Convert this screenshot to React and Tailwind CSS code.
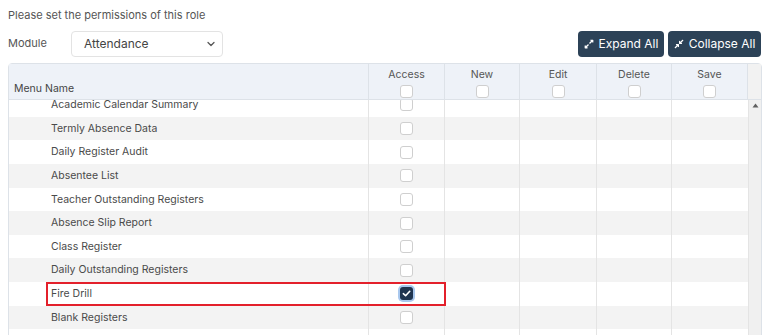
import { ChevronDown } from "lucide-react";
import { FaExpandAlt, FaCompressAlt } from "react-icons/fa";

const rows = [
  "Academic Calendar Summary",
  "Termly Absence Data",
  "Daily Register Audit",
  "Absentee List",
  "Teacher Outstanding Registers",
  "Absence Slip Report",
  "Class Register",
  "Daily Outstanding Registers",
  "Fire Drill",
  "Blank Registers",
];

const cols = ["Access", "New", "Edit", "Delete", "Save"];

const Box = ({ checked }) =>
  checked ? (
    <span className="w-[13px] h-[13px] rounded-[3px] bg-[#1f3550] ring-2 ring-[#a9c8ee] flex items-center justify-center">
      <svg width="9" height="9" viewBox="0 0 10 10" fill="none">
        <path d="M1.5 5.2 L4 7.5 L8.6 2.5" stroke="white" strokeWidth="1.8" strokeLinecap="round" strokeLinejoin="round" />
      </svg>
    </span>
  ) : (
    <span className="w-[13px] h-[13px] rounded-[3px] bg-white border border-[#cfcfcf]" />
  );

const App = () => {
  return (
    <div className="w-[768px] h-[335px] overflow-hidden bg-white font-['Inter',sans-serif] text-[#4a4a4a]">

      <p className="pl-2 pt-[8px] text-[11px] leading-[14px] text-[#555]">
        Please set the permissions of this role
      </p>

      <div className="flex items-center pl-2 pr-[7px] mt-[9px]">
        <span className="w-[63px] text-[11px] text-[#555] -mt-[2px]">Module</span>
        <div className="w-[152px] h-[26px] border border-[#e3e3e3] rounded-[4px] flex items-center justify-between pl-[12px] pr-[5px] text-[12px] text-[#444]">
          Attendance
          <ChevronDown className="w-[12px] h-[12px] text-[#555]" strokeWidth={2.5} />
        </div>

        <div className="ml-auto flex gap-[4px]">
          <button className="h-[26px] w-[86px] rounded-[4px] bg-[#2c4257] text-white text-[12px] flex items-center justify-center gap-[5px]">
            <FaExpandAlt className="w-[10px] h-[10px]" /> Expand All
          </button>
          <button className="h-[26px] w-[93px] rounded-[4px] bg-[#2c4257] text-white text-[12px] flex items-center justify-center gap-[5px]">
            <FaCompressAlt className="w-[10px] h-[10px]" /> Collapse All
          </button>
        </div>
      </div>

      {/* Table */}
      <div className="ml-2 mr-[6px] mt-[6px] border border-[#dde2e8] rounded-t-[4px]">

        <div className="grid grid-cols-[360px_76px_75px_77px_75px_76px_13px] h-[36px] bg-[#eef2f8] border-b border-[#dde2e8]">
          <div className="border-r border-[#dde2e8] flex items-end pl-[5px] pb-[2px] text-[10.5px] text-[#444]">
            Menu Name
          </div>
          {cols.map((c) => (
            <div key={c} className="border-r border-[#dde2e8] flex flex-col items-center pt-[4px] gap-[3px]">
              <span className="text-[10.5px] leading-[14px] text-[#555]">{c}</span>
              <Box />
            </div>
          ))}
          <div className="bg-[#f2f2f2]" />
        </div>

        <div className="flex h-[240px] overflow-hidden">
          <div className="flex-1">
            <div className="-mt-[7px]">
              {rows.map((r, i) => (
                <div
                  key={r}
                  className={`relative grid grid-cols-[360px_76px_75px_77px_75px_76px] h-[23.65px] ${
                    i % 2 === 1 ? "bg-[#f3f3f3]" : "bg-white"
                  }`}
                >
                  <div className="border-r border-[#e4e4e4] flex items-center pl-[42px] text-[10.5px] text-[#4a4a4a]">
                    {r}
                  </div>
                  <div className="border-r border-[#e4e4e4] flex items-center justify-center">
                    <Box checked={r === "Fire Drill"} />
                  </div>
                  <div className="border-r border-[#e4e4e4]" />
                  <div className="border-r border-[#e4e4e4]" />
                  <div className="border-r border-[#e4e4e4]" />
                  <div />
                  {r === "Fire Drill" && (
                    <div className="absolute left-[37px] w-[400px] top-0 h-full border-2 border-[#e3202b]" />
                  )}
                </div>
              ))}
              <div className="grid grid-cols-[360px_76px_75px_77px_75px_76px] h-[40px] bg-white">
                <div className="border-r border-[#e4e4e4]" />
                <div className="border-r border-[#e4e4e4]" />
                <div className="border-r border-[#e4e4e4]" />
                <div className="border-r border-[#e4e4e4]" />
                <div className="border-r border-[#e4e4e4]" />
                <div />
              </div>
            </div>
          </div>
          <div className="w-[13px] bg-[#f0f0f0] border-l border-[#e4e4e4] flex justify-center pt-[3px]">
            <svg width="7" height="5" viewBox="0 0 7 5">
              <path d="M3.5 0.5 L6.5 4.5 L0.5 4.5 Z" fill="#606060" />
            </svg>
          </div>
        </div>

      </div>
    </div>
  );
};

export default App;
